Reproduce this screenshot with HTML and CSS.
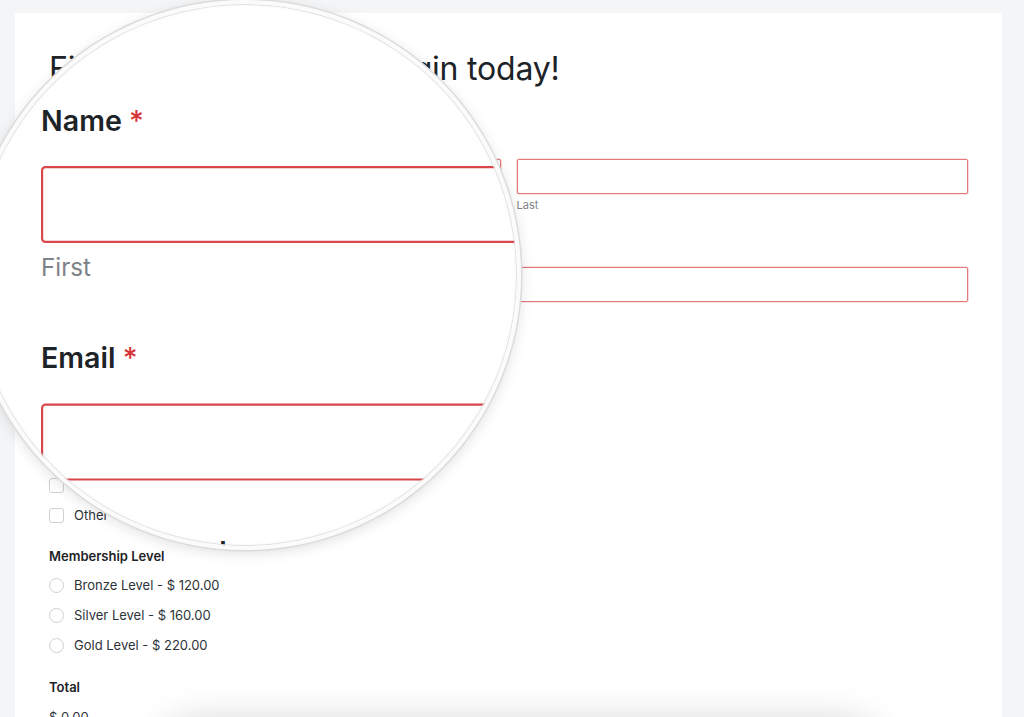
FILE: index.html
```html
<!DOCTYPE html>
<html lang="en">
<head>
<meta charset="utf-8">
<title>Membership Form</title>
<link rel="stylesheet" href="styles.css">
</head>
<body>
<div class="page">
  <main class="card">
    <h1 class="form-title">Fill out your form and begin today!</h1>
    <form class="form">
      <div class="field field-name">
        <div class="field-label">Name <span class="req">*</span></div>
        <div class="name-row">
          <div class="sub"><input class="input" type="text"><div class="sublabel">First</div></div>
          <div class="sub"><input class="input" type="text"><div class="sublabel">Last</div></div>
        </div>
      </div>
      <div class="field field-email">
        <div class="field-label">Email <span class="req">*</span></div>
        <input class="input" type="email">
      </div>
      <div class="field field-hear">
        <div class="field-label">How did you hear about us?</div>
        <div class="choices">
          <div class="choice"><span class="box"></span>Google</div>
          <div class="choice"><span class="box"></span>Facebook</div>
          <div class="choice"><span class="box"></span>Twitter</div>
          <div class="choice"><span class="box"></span>A friend</div>
          <div class="choice"><span class="box"></span>Newsletter</div>
          <div class="choice"><span class="box"></span>Other</div>
        </div>
      </div>
      <div class="field field-level">
        <div class="field-label">Membership Level</div>
        <div class="choices">
          <div class="choice"><span class="box radio"></span>Bronze Level - $ 120.00</div>
          <div class="choice"><span class="box radio"></span>Silver Level - $ 160.00</div>
          <div class="choice"><span class="box radio"></span>Gold Level - $ 220.00</div>
        </div>
      </div>
      <div class="field field-total">
        <div class="field-label">Total</div>
        <div class="total-value">$ 0.00</div>
      </div>
    </form>
  </main>
</div>

<div class="lens" aria-hidden="true">
  <div class="lens-view">
    <div class="page">
      <div class="card card-zoom">
        <div class="form-title">Fill out your form and begin today!</div>
        <div class="form">
          <div class="field field-name">
            <div class="field-label">Name <span class="req">*</span></div>
            <div class="name-row">
              <div class="sub"><div class="input"></div><div class="sublabel">First</div></div>
              <div class="sub"><div class="input"></div><div class="sublabel">Last</div></div>
            </div>
          </div>
          <div class="field field-email">
            <div class="field-label">Email <span class="req">*</span></div>
            <div class="input"></div>
          </div>
          <div class="field field-hear">
            <div class="field-label">How did you hear about us?</div>
            <div class="choices">
              <div class="choice"><span class="box"></span>Google</div>
              <div class="choice"><span class="box"></span>Facebook</div>
            </div>
          </div>
        </div>
      </div>
    </div>
  </div>
</div>

<div class="dock-shadow"></div>
</body>
</html>
```
FILE: styles.css
```css
* { box-sizing: border-box; }
html, body { margin: 0; height: 100%; overflow: hidden; }
body {
  position: relative;
  background: #f4f5f7;
  font-family: Inter, "Noto Sans", sans-serif;
  color: #1d2327;
}
.page { width: 1024px; padding: 13px 22px 0 15px; }
.card { background: #fff; min-height: 740px; padding: 37px 34px 40px; }
.form-title {
  margin: 0 0 43px;
  font-size: 32px;
  line-height: 37px;
  font-weight: 400;
  letter-spacing: -0.2px;
  white-space: nowrap;
  color: #1d2327;
}
.field-label { font-size: 13px; line-height: 16px; font-weight: 600; color: #1d2327; margin-bottom: 13px; }
.req { color: #d63638; font-weight: 500; }
.name-row { display: flex; gap: 16px; }
.sub { flex: 1; }
.input {
  display: block;
  width: 100%;
  height: 35px;
  margin: 0;
  padding: 0 8px;
  border: 1px solid #e27a7c;
  border-radius: 2px;
  background: #fff;
  box-shadow: 0 0 0 0.6px rgba(226, 122, 124, 0.45);
  font: inherit;
  outline: none;
  -webkit-appearance: none;
  appearance: none;
}
.sublabel { margin-top: 5px; font-size: 11px; line-height: 13px; color: #80848a; }
.field-name { margin-bottom: 26px; }
.field-email { margin-bottom: 24px; }
.field-hear .field-label { margin-bottom: 8px; }
.field-hear { margin-bottom: 18px; }
.field-level .field-label { margin-bottom: 6px; }
.field-level { margin-bottom: 19px; }
.field-total .field-label { margin-bottom: 14px; }
.choice {
  display: flex;
  align-items: center;
  gap: 10px;
  height: 30px;
  font-size: 13px;
  color: #2c3338;
}
.box {
  flex: none;
  width: 15px;
  height: 15px;
  border: 1px solid #cfd0d3;
  border-radius: 3px;
  background: #fff;
}
.radio { border-radius: 50%; }
.total-value { font-size: 13px; line-height: 16px; color: #2c3338; }

/* magnifier */
.lens {
  position: absolute;
  left: -31px;
  top: 0;
  width: 552px;
  height: 550px;
  border-radius: 50%;
  overflow: hidden;
  background: #fff;
  border: 4px solid #fbfbfb;
  box-shadow: 0 0 0 1.5px #dcdcdc, 0 3px 14px rgba(0, 0, 0, 0.13);
  z-index: 2;
}
.lens::after {
  content: "";
  position: absolute;
  inset: 0;
  border-radius: 50%;
  box-shadow: inset 0 0 0 1px #e0e0e0, inset 0 0 4px rgba(0, 0, 0, 0.06);
}
.lens-view {
  position: absolute;
  left: 27px;
  top: -4px;
  width: 1024px;
  transform: translate(-66.8px, -183.8px) scale(2.2);
  transform-origin: 0 0;
}
.card-zoom .input { border-color: #d9474a; box-shadow: none; }
.card-zoom .sublabel { color: #7d8188; }

.dock-shadow {
  position: absolute;
  left: 175px;
  top: 738px;
  width: 690px;
  height: 40px;
  border-radius: 20px;
  background: #ddd;
  box-shadow: 0 0 40px 14px rgba(0, 0, 0, 0.2);
  z-index: 3;
}
```
